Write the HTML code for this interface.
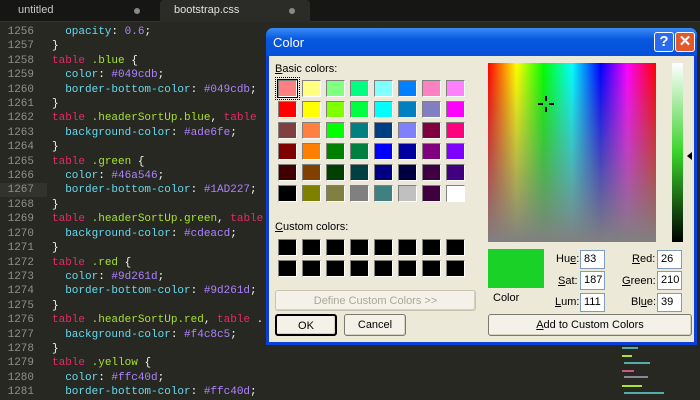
<!DOCTYPE html>
<html><head><style>
*{margin:0;padding:0;box-sizing:border-box}
body{width:700px;height:400px;overflow:hidden;background:#272822;position:relative;font-family:"Liberation Sans",sans-serif}
.tabs{position:absolute;left:0;top:0;width:700px;height:22px;background:#161614;border-bottom:1px solid #333}
.tab{position:absolute;top:0;height:22px;font-size:11px;color:#c8c8c8;padding:4px 0 0 18px}
.dot{position:absolute;top:8px;width:6px;height:6px;border-radius:3px;background:#888}
.code{position:absolute;left:0;top:25px;font-family:"Liberation Mono",monospace;font-size:11px;line-height:14.4px;color:#f8f8f2}
.ln{position:absolute;left:0;top:0;width:34px;text-align:right;color:#8f908a}
.tx{position:absolute;left:52px;top:0;white-space:pre}
.k{color:#e8286b}.s{color:#a6e22e}.p{color:#66d9ef}.v{color:#ae81ff}
.dlg{position:absolute;left:266px;top:28px;width:431px;height:317px;background:#0a3fd8;border-radius:7px 7px 0 0;}
.title{position:absolute;left:0;top:0;width:431px;height:28px;background:linear-gradient(#3a8cf6,#0858e0 40%,#0650d8);border-radius:7px 7px 0 0;color:#fff;font-size:13px;padding:7px 0 0 7px}
.client{position:absolute;left:3px;top:28px;width:425px;height:286px;background:#ece9d8}
.sw{position:absolute;width:19px;height:17px;border:1px solid;border-color:#808080 #fff #fff #808080;}
.lbl{position:absolute;font-size:11px;color:#000}
.btn{position:absolute;background:#f4f2e8;border:1px solid #003c74;border-radius:3px;font-size:11px;text-align:center;color:#000;box-shadow:inset -1px -1px #d6d0c0}
.inp{position:absolute;width:25px;height:19px;background:#fff;border:1px solid #7f9db9;font-size:11px;padding:2px 0 0 3px}
.mm{position:absolute;height:2px}
</style></head><body>
<div class="tabs">
<div class="tab" style="left:0;width:160px">untitled<div class="dot" style="left:134px"></div></div>
<div class="tab" style="left:160px;width:150px;background:#2b2b27;color:#e0e0e0;border-radius:4px 4px 0 0;padding-left:14px">bootstrap.css<div class="dot" style="left:129px"></div></div>
</div>
<div style="position:absolute;left:0;top:183px;width:47px;height:14px;background:#33332e"></div>
<div class="code"><div class="ln">1256<br>1257<br>1258<br>1259<br>1260<br>1261<br>1262<br>1263<br>1264<br>1265<br>1266<br>1267<br>1268<br>1269<br>1270<br>1271<br>1272<br>1273<br>1274<br>1275<br>1276<br>1277<br>1278<br>1279<br>1280<br>1281</div><div class="tx">  <span class="p">opacity</span>: <span class="v">0.6</span>;
}
<span class="k">table</span> <span class="s">.blue</span> {
  <span class="p">color</span>: <span class="v">#049cdb</span>;
  <span class="p">border-bottom-color</span>: <span class="v">#049cdb</span>;
}
<span class="k">table</span> <span class="s">.headerSortUp.blue</span>, <span class="k">table</span>
  <span class="p">background-color</span>: <span class="v">#ade6fe</span>;
}
<span class="k">table</span> <span class="s">.green</span> {
  <span class="p">color</span>: <span class="v">#46a546</span>;
  <span class="p">border-bottom-color</span>: <span class="v">#1AD227</span>;
}
<span class="k">table</span> <span class="s">.headerSortUp.green</span>, <span class="k">table</span>
  <span class="p">background-color</span>: <span class="v">#cdeacd</span>;
}
<span class="k">table</span> <span class="s">.red</span> {
  <span class="p">color</span>: <span class="v">#9d261d</span>;
  <span class="p">border-bottom-color</span>: <span class="v">#9d261d</span>;
}
<span class="k">table</span> <span class="s">.headerSortUp.red</span>, <span class="k">table</span> .
  <span class="p">background-color</span>: <span class="v">#f4c8c5</span>;
}
<span class="k">table</span> <span class="s">.yellow</span> {
  <span class="p">color</span>: <span class="v">#ffc40d</span>;
  <span class="p">border-bottom-color</span>: <span class="v">#ffc40d</span>;</div></div>
<div class="mm" style="left:622px;top:347px;width:16px;background:#5aa"></div>
<div class="mm" style="left:622px;top:355px;width:10px;background:#a6e22e"></div>
<div class="mm" style="left:624px;top:362px;width:26px;background:#5aa"></div>
<div class="mm" style="left:622px;top:370px;width:12px;background:#c58"></div>
<div class="mm" style="left:624px;top:376px;width:24px;background:#889"></div>
<div class="mm" style="left:622px;top:385px;width:20px;background:#a6e22e"></div>
<div class="mm" style="left:624px;top:392px;width:40px;background:#5aa"></div>

<div class="dlg">
<div class="title">Color
<div style="position:absolute;left:388px;top:4px;width:20px;height:20px;border:1px solid #fff;border-radius:3px;background:#2a6af0;color:#fff;font-weight:bold;font-size:15px;text-align:center;line-height:18px">?</div>
<div style="position:absolute;left:409px;top:4px;width:20px;height:20px;border:1px solid #fff;border-radius:3px;background:#e0582c;color:#fff;font-weight:bold;font-size:15px;text-align:center;line-height:18px">✕</div>
</div>
<div class="client">
<div class="lbl" style="left:6px;top:7px"><u>B</u>asic colors:</div>
<div id="grid"></div>
<div class="lbl" style="left:6px;top:165px"><u>C</u>ustom colors:</div>
<div class="btn" style="left:6px;top:234px;width:201px;height:21px;color:#a8a898;border-color:#c8c4b0;padding-top:4px">Define Custom Colors &gt;&gt;</div>
<div class="btn" style="left:6px;top:258px;width:62px;height:22px;padding-top:4px;border-width:2px;border-color:#000">OK</div>
<div class="btn" style="left:75px;top:258px;width:62px;height:22px;padding-top:4px;border-color:#7a7a70">Cancel</div>
<div style="position:absolute;left:219px;top:7px;width:168px;height:179px;background:linear-gradient(to bottom,rgba(128,128,128,0),#808080),linear-gradient(to right,#f00,#ff0 17%,#0f0 33%,#0ff 50%,#00f 67%,#f0f 83%,#f00)"></div>
<svg style="position:absolute;left:269px;top:40px" width="16" height="16"><path d="M7 0h2v5h-2zM7 11h2v5h-2zM0 7h5v2h-5zM11 7h5v2h-5z" fill="#000"/></svg>
<div style="position:absolute;left:403px;top:7px;width:11px;height:179px;background:linear-gradient(#fff,#3ad32a 50%,#000)"></div>
<div style="position:absolute;left:418px;top:96px;width:0;height:0;border-top:4px solid transparent;border-bottom:4px solid transparent;border-right:5px solid #000"></div>
<div style="position:absolute;left:219px;top:193px;width:56px;height:39px;background:#1ad227"></div>
<div class="lbl" style="left:224px;top:236px">Color</div>
<div class="lbl" style="left:287px;top:197px">Hu<u>e</u>:</div>
<div class="lbl" style="left:289px;top:219px"><u>S</u>at:</div>
<div class="lbl" style="left:286px;top:240px"><u>L</u>um:</div>
<div class="inp" style="left:311px;top:194px">83</div>
<div class="inp" style="left:311px;top:215px">187</div>
<div class="inp" style="left:311px;top:237px">111</div>
<div class="lbl" style="left:363px;top:197px"><u>R</u>ed:</div>
<div class="lbl" style="left:353px;top:219px"><u>G</u>reen:</div>
<div class="lbl" style="left:362px;top:240px">Bl<u>u</u>e:</div>
<div class="inp" style="left:388px;top:194px">26</div>
<div class="inp" style="left:388px;top:215px">210</div>
<div class="inp" style="left:388px;top:237px">39</div>
<div class="btn" style="left:219px;top:258px;width:204px;height:22px;padding-top:4px;border-color:#7a7a70"><u>A</u>dd to Custom Colors</div>
</div>
</div>
<script>
var c=["#ff8080","#ffff80","#80ff80","#00ff80","#80ffff","#0080ff","#ff80c0","#ff80ff",
"#ff0000","#ffff00","#80ff00","#00ff40","#00ffff","#0080c0","#8080c0","#ff00ff",
"#804040","#ff8040","#00ff00","#008080","#004080","#8080ff","#800040","#ff0080",
"#800000","#ff8000","#008000","#008040","#0000ff","#0000a0","#800080","#8000ff",
"#400000","#804000","#004000","#004040","#000080","#000040","#400040","#400080",
"#000000","#808000","#808040","#808080","#408080","#c0c0c0","#400040","#ffffff"];
var g=document.getElementById('grid'),h='';
for(var i=0;i<48;i++){var r=Math.floor(i/8),k=i%8;h+='<div class="sw" style="left:'+(9+k*24)+'px;top:'+(24+r*21)+'px;background:'+c[i]+'"></div>';}
for(var i=0;i<16;i++){var r=Math.floor(i/8),k=i%8;h+='<div class="sw" style="left:'+(9+k*24)+'px;top:'+(183+r*21)+'px;background:#000"></div>';}
h+='<div style="position:absolute;left:6px;top:21px;width:25px;height:23px;border:1px dotted #000;outline:1px solid #000;outline-offset:-3px"></div>';
g.innerHTML=h;
</script>
</body></html>
